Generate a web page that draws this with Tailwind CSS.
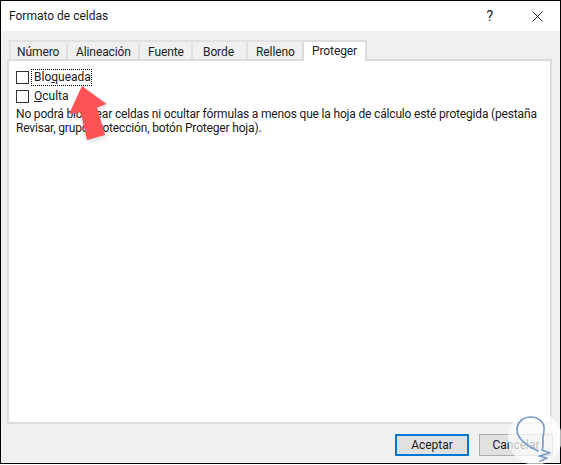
<!DOCTYPE html>
<html lang="es">
<head>
    <meta charset="UTF-8">
    <title>Formato de celdas</title>
    <script src="https://cdn.jsdelivr.net/npm/@tailwindcss/browser@4"></script>
</head>
<body class="bg-white">
    <div class="relative w-[561px] h-[465px] overflow-hidden font-['Roboto','Open_Sans',sans-serif] text-[12px] leading-[14px] text-[#1a1a1a]">
        <div class="flex flex-col h-[464px] border border-black bg-[#f0f0f0]">
            <div class="flex items-center h-[30px] shrink-0 bg-white pl-[8px]">
                <span>Formato de celdas</span>
                <span class="ml-auto mr-[39px] text-[14px]">?</span>
                <svg class="mr-[17px]" width="11" height="11" viewBox="0 0 11 11" fill="none" stroke="#222" stroke-width="1"><path d="M.5.5l10 10M10.5.5l-10 10"/></svg>
            </div>

            <div class="flex items-end h-[28px] shrink-0 pl-[8px] text-[#222] tracking-[-0.1px]">
                <div class="w-[57px] h-[19px] pl-[6px] border-t-2 border-l-2 border-[#e1e1e1] leading-[21px]">Número</div>
                <div class="w-[72px] h-[19px] pl-[8px] border-t-2 border-l-2 border-[#e1e1e1] leading-[21px]">Alineación</div>
                <div class="w-[53px] h-[19px] pl-[8px] border-t-2 border-l-2 border-[#e1e1e1] leading-[21px]">Fuente</div>
                <div class="w-[55px] h-[19px] pl-[10px] border-t-2 border-l-2 border-[#e1e1e1] leading-[21px]">Borde</div>
                <div class="w-[56px] h-[19px] pl-[8px] border-t-2 border-l-2 border-[#e1e1e1] leading-[21px]">Relleno</div>
                <div class="relative z-10 w-[65px] h-[21px] -mb-[2px] pl-[8px] border-t-2 border-x-2 border-[#dcdcdc] bg-white leading-[19px]">Proteger</div>
            </div>

            <div class="ml-[6px] mr-[8px] h-[365px] shrink-0 border-2 border-[#dcdcdc] bg-white pl-[7px] pt-[8px]">
                <label class="flex items-center h-[16px]">
                    <span class="w-[13px] h-[13px] border border-[#333] bg-white"></span>
                    <span class="ml-[2px] px-[2px] w-[61px] border border-dotted border-black h-[17px] leading-[15px]">Blo<u>q</u>ueada</span>
                </label>
                <label class="flex items-center h-[16px] mt-[3px]">
                    <span class="w-[13px] h-[13px] border border-[#333] bg-white"></span>
                    <span class="ml-[5px]"><u>O</u>culta</span>
                </label>
                <p class="mt-[3px] whitespace-nowrap tracking-[-0.17px]">No podrá bloquear celdas ni ocultar fórmulas a menos que la hoja de cálculo esté protegida (pestaña<br>Revisar, grupo Protección, botón Proteger hoja).</p>
            </div>

            <div class="flex justify-end gap-[10px] mt-[10px] mr-[7px]">
                <button class="w-[74px] h-[22px] border-2 border-[#0078d7] bg-[#e1e1e1] leading-[14px]">Aceptar</button>
                <button class="w-[74px] h-[22px] border border-[#adadad] bg-[#e1e1e1] leading-[14px]">Cancelar</button>
            </div>
        </div>

        <svg class="absolute left-0 top-0 drop-shadow-[1px_2px_2px_rgba(0,0,0,0.15)]" width="561" height="465" viewBox="0 0 561 465">
            <path d="M82 86L106.500 104 97 107.500 105 135 87 140 80.500 112 69 114Z" fill="#fe5355"/>
        </svg>

        <svg class="absolute left-[505px] top-[408px]" width="56" height="57" viewBox="0 0 56 57" fill="none">
            <circle cx="30" cy="30" r="27" fill="#fff" fill-opacity=".7"/>
            <path d="M33 43C24 39 12 31 12 22 12 14 18 9 26 9 34 9 40 15 39 22 39 26 37 30 38 34 38 38 38 41 37 42L45 45 34 48 42 50 35 53" stroke="#7a9cc6" stroke-width="1.700" stroke-linecap="round" stroke-linejoin="round"/>
        </svg>
    </div>
</body>
</html>
